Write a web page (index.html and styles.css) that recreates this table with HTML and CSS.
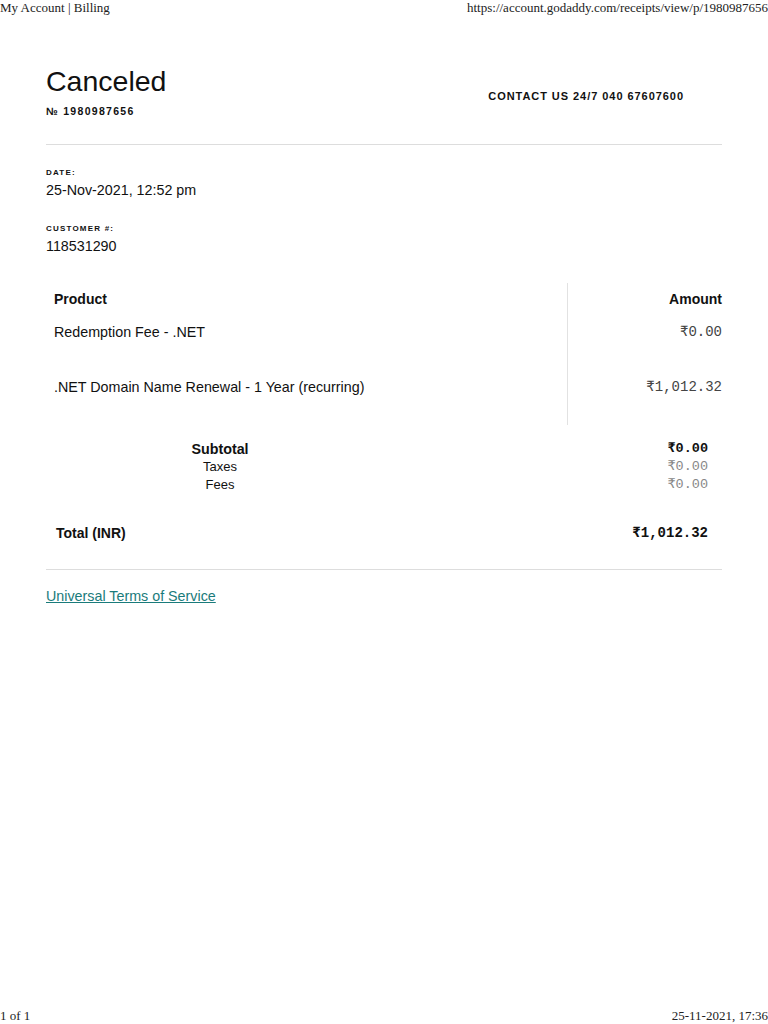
FILE: index.html
```html
<!DOCTYPE html>
<html lang="en">
<head>
    <title>My Account | Billing</title>
    <link rel="stylesheet" href="styles.css">
</head>
<body>
    <div class="print-head">
        <span>My Account | Billing</span>
        <span>https://account.godaddy.com/receipts/view/p/1980987656</span>
    </div>

    <div class="receipt">
        <div class="top">
            <div>
                <h1>Canceled</h1>
                <div class="order-no">№ 1980987656</div>
            </div>
            <div class="contact">CONTACT US 24/7 040 67607600</div>
        </div>

        <div class="meta">
            <div class="label">DATE:</div>
            <div class="value">25-Nov-2021, 12:52 pm</div>
            <div class="label">CUSTOMER #:</div>
            <div class="value">118531290</div>
        </div>

        <div class="items">
            <div class="col-product">
                <div class="th">Product</div>
                <div class="item">Redemption Fee - .NET</div>
                <div class="item">.NET Domain Name Renewal - 1 Year (recurring)</div>
            </div>
            <div class="col-amount">
                <div class="th">Amount</div>
                <div class="item money">₹0.00</div>
                <div class="item money">₹1,012.32</div>
            </div>
        </div>

        <div class="summary">
            <div class="sum-label bold">Subtotal</div>
            <div class="sum-value money bold">₹0.00</div>
            <div class="sum-label">Taxes</div>
            <div class="sum-value money muted">₹0.00</div>
            <div class="sum-label">Fees</div>
            <div class="sum-value money muted">₹0.00</div>
        </div>

        <div class="total">
            <div class="bold">Total (INR)</div>
            <div class="money bold">₹1,012.32</div>
        </div>

        <a class="terms" href="#">Universal Terms of Service</a>
    </div>

    <div class="print-foot">
        <span>1 of 1</span>
        <span>25-11-2021, 17:36</span>
    </div>
</body>
</html>
```

FILE: styles.css
```css
body {
    margin: 0;
    height: 1024px;
    position: relative;
    font-family: "Liberation Sans", Arial, sans-serif;
    color: #111;
    background: #fff;
}
.print-head, .print-foot {
    display: flex;
    justify-content: space-between;
    font-family: "Liberation Serif", "Times New Roman", serif;
    font-size: 13px;
    color: #222;
    line-height: 15px;
}
.print-foot {
    position: absolute;
    left: 0;
    right: 0;
    bottom: 0;
    padding-bottom: 1px;
}
.receipt {
    margin: 0 46px;
    padding-top: 46px;
}
.top {
    display: flex;
    justify-content: space-between;
    padding-bottom: 27px;
    border-bottom: 1px solid #ddd;
}
h1 {
    font-size: 28.5px;
    font-weight: normal;
    margin: 0;
    line-height: 40px;
}
.order-no {
    font-size: 10.5px;
    font-weight: bold;
    letter-spacing: 1.3px;
    margin-top: 4px;
}
.contact {
    font-size: 11px;
    font-weight: bold;
    letter-spacing: 0.95px;
    margin-top: 29px;
    margin-right: 38px;
}
.meta {
    padding-top: 23px;
}
.label {
    font-size: 8px;
    font-weight: bold;
    letter-spacing: 1.2px;
    line-height: 10px;
}
.value {
    font-size: 14.3px;
    line-height: 20px;
    margin-top: 2px;
    margin-bottom: 24px;
}
.items {
    display: flex;
    margin-top: 27px;
}
.col-product {
    flex: 1;
    padding-left: 8px;
}
.col-amount {
    width: 154px;
    border-left: 1px solid #e2e2e2;
    text-align: right;
}
.th {
    font-size: 14px;
    font-weight: bold;
    line-height: 18px;
    padding-top: 7px;
    margin-bottom: 15px;
}
.item {
    font-size: 14.3px;
    line-height: 18px;
    height: 55px;
}
.item:last-child {
    height: 47px;
}
.money {
    font-family: "Liberation Mono", "Courier New", monospace;
    font-size: 14px;
    color: #444;
}
.summary {
    display: grid;
    grid-template-columns: 348px 1fr;
    margin-top: 15px;
}
.sum-label {
    text-align: center;
    font-size: 13px;
    line-height: 18px;
}
.sum-label.bold {
    font-size: 14.3px;
}
.sum-value {
    text-align: right;
    padding-right: 14px;
    line-height: 18px;
    font-size: 13.5px;
}
.bold {
    font-weight: bold;
    color: #111;
}
.muted {
    color: #888;
}
.total {
    display: flex;
    justify-content: space-between;
    align-items: center;
    padding: 30px 14px 27px 10px;
    border-bottom: 1px solid #ddd;
    font-size: 14px;
    line-height: 18px;
}
.total .money {
    font-size: 14px;
}
.terms {
    display: inline-block;
    margin-top: 18px;
    font-size: 14.3px;
    color: #1a7b7b;
}
```
